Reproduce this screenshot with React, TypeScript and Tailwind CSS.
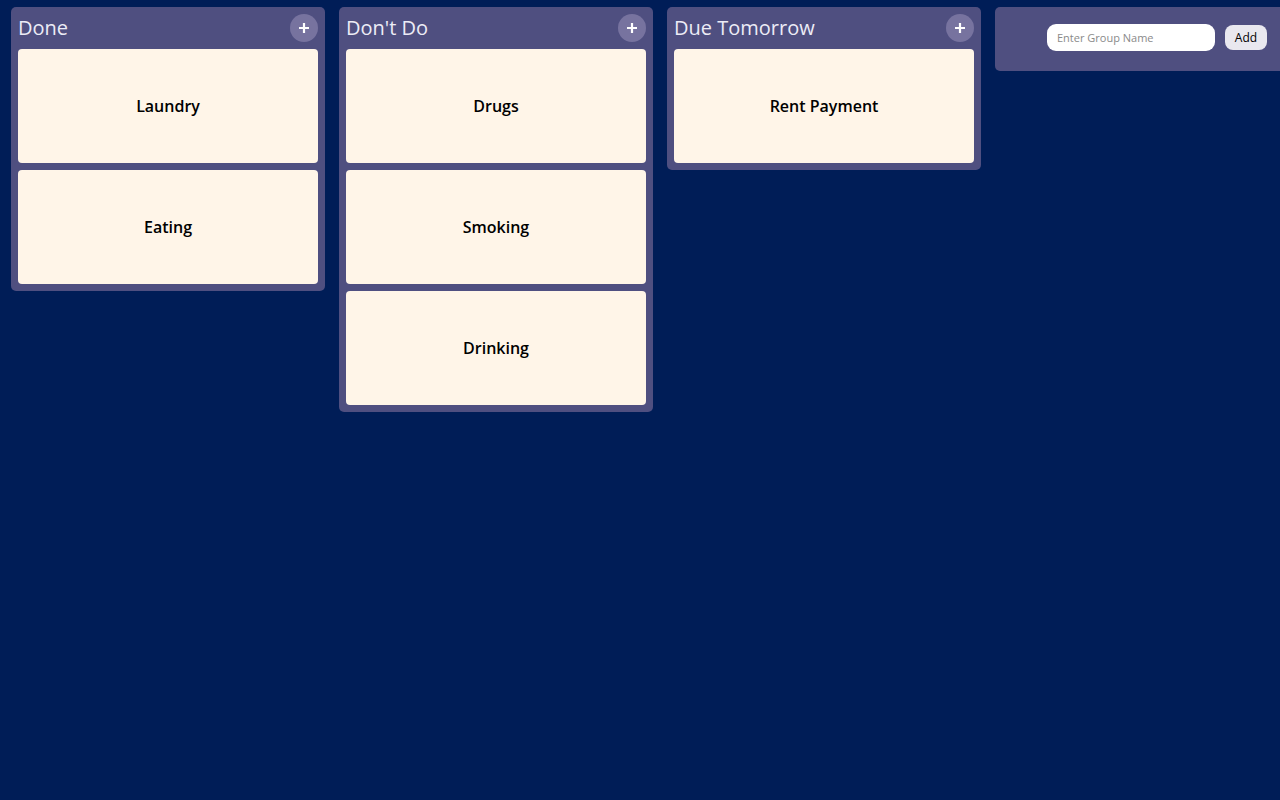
import { useState } from "react"

type Group = {
	title: string
	items: string[]
}

const groups: Group[] = [
	{ title: "Done", items: ["Laundry", "Eating"] },
	{ title: "Don't Do", items: ["Drugs", "Smoking", "Drinking"] },
	{ title: "Due Tomorrow", items: ["Rent Payment"] },
]

function GroupColumn({ group }: { group: Group }) {
	return (
		<section className="w-[314px] shrink-0 rounded-[5px] bg-[#4f4f80] p-[7px]">
			<header className="flex h-[28px] items-center justify-between mb-[7px]">
				<h2 className="text-[20px] leading-none text-[#ececf6]">{group.title}</h2>
				<button className="flex h-[28px] w-[28px] items-center justify-center rounded-full bg-[#77739f] text-white">
					<svg width="12" height="12" viewBox="0 0 12 12">
						<path d="M6 1v10M1 6h10" stroke="currentColor" strokeWidth="2.2" />
					</svg>
				</button>
			</header>
			<div className="flex flex-col gap-[7px]">
				{group.items.map((item) => (
					<article
						key={item}
						className="flex h-[114px] items-center justify-center rounded-[4px] bg-[#fff5e8]"
					>
						<span className="text-[16px] font-semibold text-black">{item}</span>
					</article>
				))}
			</div>
		</section>
	)
}

export default function App() {
	const [name, setName] = useState("")

	return (
		<main
			className="h-screen w-screen overflow-hidden bg-[#001d57]"
			style={{ fontFamily: '"Open Sans", "Noto Sans", sans-serif' }}
		>
			<div className="flex items-start gap-[14px] pl-[11px] pt-[7px]">
				{groups.map((g) => (
					<GroupColumn key={g.title} group={g} />
				))}
				<section className="flex h-[64px] w-[314px] shrink-0 items-start gap-[10px] rounded-[5px] bg-[#4f4f80] pl-[52px] pt-[17px]">
					<input
						value={name}
						onChange={(e) => setName(e.target.value)}
						placeholder="Enter Group Name"
						className="h-[27px] w-[168px] rounded-[9px] bg-white px-[10px] text-[11px] text-black outline-none placeholder:text-[#8a8a8a]"
					/>
					<button className="mt-[1px] h-[25px] w-[42px] rounded-[8px] bg-[#e9e8ef] text-[12px] text-black">
						Add
					</button>
				</section>
			</div>
		</main>
	)
}
